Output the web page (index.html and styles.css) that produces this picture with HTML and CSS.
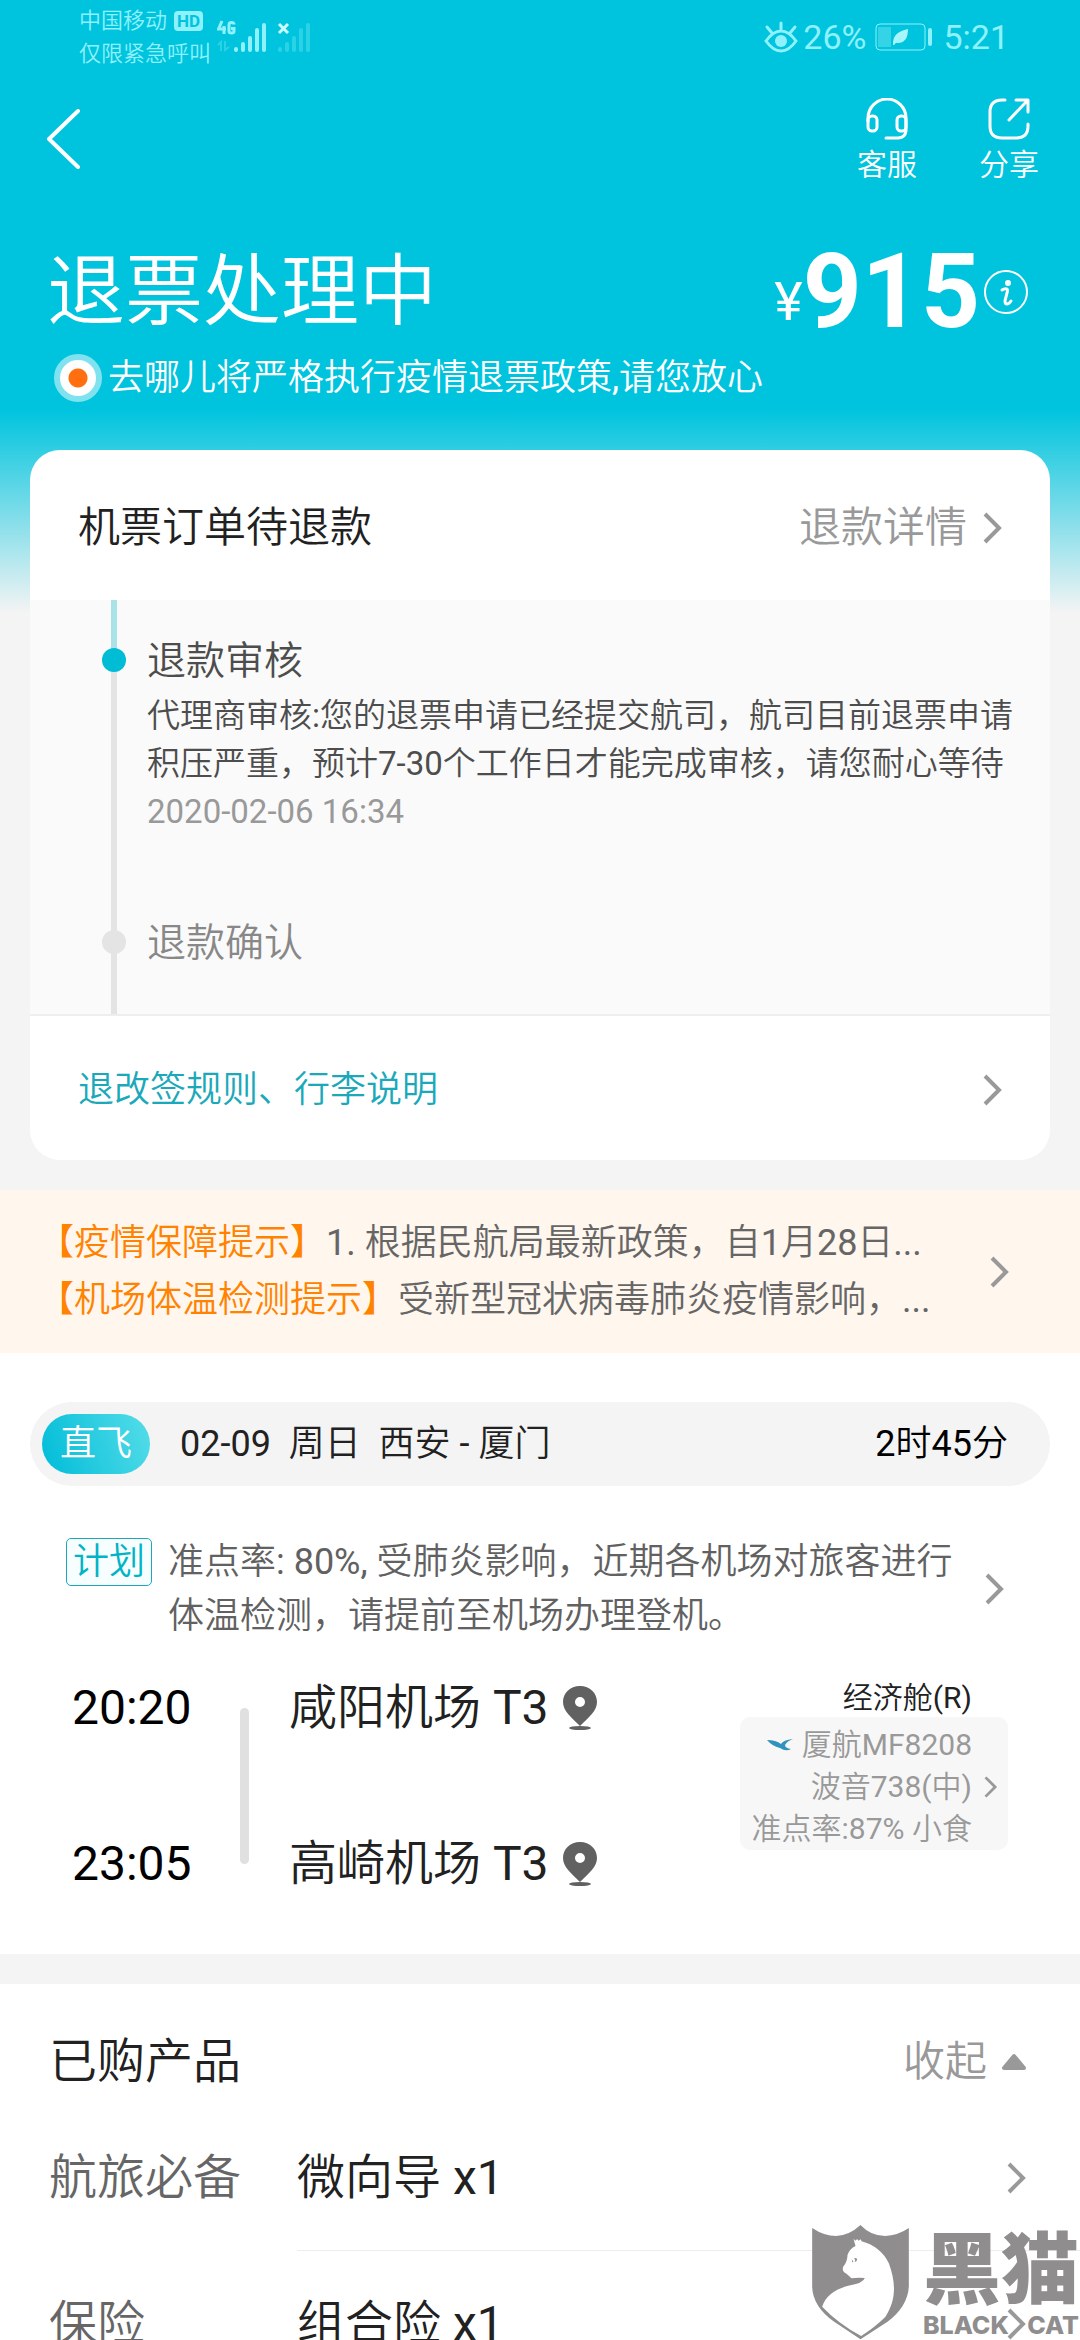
FILE: index.html
```html
<!DOCTYPE html>
<html lang="zh-CN">
<head>
<meta charset="utf-8">
<meta name="viewport" content="width=device-width">
<title>退票处理中</title>
<link rel="stylesheet" href="styles.css">
</head>
<body>
<svg class="defs" aria-hidden="true">
  <symbol id="chevron" viewBox="0 0 20 32"><path d="M2 2 16 16 2 30" fill="none" stroke="currentColor" stroke-width="4"/></symbol>
  <symbol id="pin" viewBox="0 0 34 44"><path fill="currentColor" fill-rule="evenodd" d="M17 0C7 0 0 7 0 16c0 9 8 15 17 24 9-9 17-15 17-24C34 7 27 0 17 0Zm0 11a5 5 0 1 1 0 10 5 5 0 0 1 0-10Z"/><ellipse cx="17" cy="42" rx="11" ry="2" fill="currentColor"/></symbol>
</svg>
<div class="page">
  <div class="status">
    <div class="carriers">
      <div class="carrier">中国移动 <span class="hd">HD</span></div>
      <div class="carrier">仅限紧急呼叫</div>
    </div>
    <svg class="signals" viewBox="0 0 94 34" aria-hidden="true">
      <g fill="none" stroke="#8ef1fb" stroke-width="3"><path d="M5 1 1.500 9H9M7 6v8M17 4.500Q17 2.500 14.500 2.500T12 5v6q0 2 2.500 2T17 11V8.500h-3"/></g>
      <g stroke="#8ef1fb" stroke-width="4" stroke-linecap="round"><path d="M19 29v1M26 24v6M33 18v12M40 10v20M47 5v25"/></g>
      <g stroke="#2bd2e6" stroke-width="4" stroke-linecap="round"><path d="M63 29v1M70 24v6M77 18v12M84 10v20M91 5v25"/></g>
      <path d="m62 4 9 9m0-9-9 9" stroke="#c9fbff" stroke-width="3"/>
      <path d="M4 31v-9l-3 3m7-4v9l4-3" fill="none" stroke="#2bd2e6" stroke-width="2"/>
    </svg>
    <div class="power">
      <svg width="34" height="32" viewBox="0 0 34 32" aria-hidden="true"><path d="M2 20Q9 10 17 10t15 10q-7 10-15 10T2 20ZM17 10V2M8 12 3 6m23 6 5-6" fill="none" stroke="#8ef1fb" stroke-width="3" stroke-linecap="round"/><circle cx="17" cy="20" r="6" fill="#8ef1fb"/></svg>
      <span>26%</span>
      <svg class="battery" width="58" height="28" viewBox="0 0 58 28" aria-hidden="true"><rect x="1" y="1" width="49" height="26" rx="4" fill="none" stroke="#8ef1fb" stroke-width="1"/><rect x="3" y="4" width="13" height="20" fill="#35d3e6"/><rect x="53" y="5" width="4" height="18" rx="2" fill="#8ef1fb"/><path d="M18 22q-1-13 15-16 0 15-12 14l8-9-10 11Z" fill="#a9f5fc"/></svg>
      <span>5:21</span>
    </div>
  </div>

  <header class="nav">
    <button class="back" aria-label="返回"><svg width="34" height="60" viewBox="0 0 34 60"><path d="M32 2 3 30l29 28" fill="none" stroke="#fff" stroke-width="4" stroke-linecap="round" stroke-linejoin="round"/></svg></button>
    <div class="actions">
      <button class="action"><svg width="42" height="42" viewBox="0 0 42 42"><g fill="none" stroke="#fff" stroke-width="3" stroke-linecap="round"><path d="M2 23v-3a19 19 0 0 1 38 0v13q-1 7-8 7H20"/><rect x="2" y="18" width="9" height="15" rx="4"/><rect x="31" y="18" width="9" height="15" rx="4"/></g></svg>客服</button>
      <button class="action"><svg width="42" height="42" viewBox="0 0 42 42"><path d="M17 2h-3Q2 2 2 14v14q0 12 12 12h14q12 0 12-12v-2M21 22 39 3M28 2h12v12" fill="none" stroke="#fff" stroke-width="3" stroke-linecap="round" stroke-linejoin="round"/></svg>分享</button>
    </div>
  </header>

  <section class="summary">
    <h1>退票处理中</h1>
    <div class="price"><span class="yen">¥</span><strong>915</strong>
      <button class="info" aria-label="说明"><svg width="45" height="45" viewBox="0 0 45 45"><circle cx="22" cy="22" r="21" fill="none" stroke="#fff" stroke-width="2"/><circle cx="24" cy="13" r="3" fill="#fff"/><path d="M18 20q3-2 5-1 1 1 0 4l-2 8q0 3 2 3t4-3" fill="none" stroke="#fff" stroke-width="3" stroke-linecap="round"/></svg></button>
    </div>
  </section>
  <p class="promise"><span class="radio"></span>去哪儿将严格执行疫情退票政策,请您放心</p>

  <section class="card">
    <div class="card-head">
      <h2>机票订单待退款</h2>
      <a class="detail" href="#">退款详情<svg class="chev"><use href="#chevron"/></svg></a>
    </div>
    <ol class="steps">
      <li class="step done">
        <h3>退款审核</h3>
        <p>代理商审核:您的退票申请已经提交航司，航司目前退票申请积压严重，预计7-30个工作日才能完成审核，请您耐心等待</p>
        <time>2020-02-06 16:34</time>
      </li>
      <li class="step"><h3>退款确认</h3></li>
    </ol>
    <a class="rules" href="#">退改签规则、行李说明<svg class="chev"><use href="#chevron"/></svg></a>
  </section>

  <a class="notice" href="#">
    <div>
      <p><em>【疫情保障提示】</em>1. 根据民航局最新政策，自1月28日...</p>
      <p><em>【机场体温检测提示】</em>受新型冠状病毒肺炎疫情影响，...</p>
    </div>
    <svg class="chev"><use href="#chevron"/></svg>
  </a>

  <section class="flight">
    <div class="route">
      <span class="direct">直飞</span>
      <span class="date">02-09&nbsp; 周日&nbsp; 西安 - 厦门</span>
      <span class="duration">2时45分</span>
    </div>
    <a class="plan" href="#">
      <span class="tag">计划</span>
      <p>准点率: 80%, 受肺炎影响，近期各机场对旅客进行体温检测，请提前至机场办理登机。</p>
      <svg class="chev"><use href="#chevron"/></svg>
    </a>
    <div class="trip">
      <div class="times"><time>20:20</time><time>23:05</time></div>
      <div class="bar"></div>
      <div class="airports">
        <div>咸阳机场 T3<svg class="pin"><use href="#pin"/></svg></div>
        <div>高崎机场 T3<svg class="pin"><use href="#pin"/></svg></div>
      </div>
      <div class="plane">
        <p class="cabin">经济舱(R)</p>
        <a class="model" href="#">
          <div>
            <p><svg class="bird" width="27" height="14" viewBox="0 0 27 14" aria-hidden="true"><path d="M0 2q9 0 14 4 2-4 12-5-6 2-8 6 0 3 6 4-5 3-11-1Q5 8 0 2Z" fill="#2f93bd"/></svg>厦航MF8208</p>
            <p>波音738(中)</p>
            <p>准点率:87% 小食</p>
          </div>
          <svg class="chev small"><use href="#chevron"/></svg>
        </a>
      </div>
    </div>
  </section>

  <section class="products">
    <div class="products-head"><h2>已购产品</h2><button class="fold">收起<svg width="26" height="18" viewBox="0 0 26 18"><path d="M13 3 3 15h20Z" fill="#999" stroke="#999" stroke-width="4" stroke-linejoin="round"/></svg></button></div>
    <a class="product" href="#"><span class="kind">航旅必备</span><span class="item">微向导 x1<svg class="chev"><use href="#chevron"/></svg></span></a>
    <a class="product" href="#"><span class="kind">保险</span><span class="item">组合险 x1<svg class="chev"><use href="#chevron"/></svg></span></a>
  </section>

  <div class="watermark">
    <svg width="97" height="115" viewBox="64 75 290 345" aria-hidden="true"><path fill="#8f8d8e" d="M64 84q36 24 72 24 40-2 73-33 31 33 74 33 37-1 71-24v176q-4 60-64 105l-81 53-79-53Q66 320 64 260Z"/><path fill="#fff" d="m188 116 6 6 5-5 4 5 7-4 2 6q58 16 82 66c22 60 22 110-10 160q-30 30-73 58-70-38-117-88 14-45 78-63 45-7 50-23-22-2-40 1-8-8-15-14-15-6-10-21 13-15 13-35 7-20 24-27Z"/><path fill="#8f8d8e" d="m183 178 5 8-4 1Zm7-4q10-1 9 5-2 6-7 7 3-6-2-12Z"/></svg>
    <div class="brand"><span class="brand-cn">黑猫</span><span class="brand-en"><span>BLACK</span><span>CAT</span></span></div>
  </div>
</div>
</body>
</html>
```
FILE: styles.css
```css
* { box-sizing: border-box; margin: 0; padding: 0; }
body {
  font-family: Roboto, "Noto Sans CJK SC DemiLight", "Noto Sans CJK SC Light", "Noto Sans CJK SC", sans-serif;
  font-weight: 400;
  color: #212121;
  background: #f4f4f4;
}
button { font: inherit; color: inherit; background: none; border: 0; display: flex; }
a { color: inherit; text-decoration: none; }
h1, h2, h3 { font-weight: 400; }
ol { list-style: none; }
svg { display: block; flex: none; }
.defs { position: absolute; width: 0; height: 0; }

.page {
  position: relative;
  height: 100vh;
  overflow: hidden;
  background: linear-gradient(#00c4de 410px, #f4f4f4 613px);
}

.status { display: flex; padding: 4px 71px 4px 79px; color: #8ef1fb; }
.carrier { display: flex; align-items: center; gap: 7px; font-size: 22px; line-height: 33px; }
.hd {
  padding: 0 3px;
  border-radius: 4px;
  background: #8ef1fb;
  color: #00c4de;
  font-size: 17px;
  font-weight: 700;
  line-height: 20px;
}
.signals { width: 94px; height: 34px; margin: 16px 0 0 6px; }
.power { display: flex; align-items: center; gap: 5px; height: 66px; margin-left: auto; font-size: 34px; }
.battery { margin: 0 5px 0 4px; }

.nav { display: flex; justify-content: space-between; align-items: center; padding: 24px 41px 0 46px; color: #fff; }
.back { padding-bottom: 4px; }
.actions { display: flex; gap: 62px; }
.action { flex-direction: column; align-items: center; gap: 6px; font-size: 30px; line-height: 38px; }

.summary { display: flex; justify-content: space-between; align-items: center; margin-top: 43px; padding: 0 51px 0 47px; color: #fff; }
.summary h1 { padding-top: 6px; font-size: 78px; line-height: 120px; }
.price { display: flex; align-items: center; padding-top: 4px; }
.price strong { font-size: 103px; line-height: 120px; }
.yen { padding-top: 20px; font-size: 54px; line-height: 60px; }
.info { margin-left: 4px; }
.promise { display: flex; align-items: center; gap: 6px; padding: 0 54px; color: #fff; font-size: 36px; line-height: 50px; }
.radio { width: 48px; height: 48px; border: 6px solid #80e2ef; border-radius: 50%; background: radial-gradient(circle, #ff6f10 9px, #fff 10px); }

.chev { width: 20px; height: 32px; margin-left: auto; color: #999; }

.card { margin: 47px 30px 30px; border-radius: 30px; background: #fff; overflow: hidden; }
.card-head { display: flex; align-items: center; height: 150px; padding: 6px 47px 0 48px; font-size: 42px; line-height: 60px; }
.card-head h2 { font-size: 42px; }
.detail { display: flex; align-items: center; gap: 16px; margin-left: auto; color: #999; }
.steps { background: #fafafa; border-bottom: 2px solid #eee; }
.step {
  position: relative;
  min-height: 132px;
  padding: 34px 30px 0 117px;
  color: #888;
  background: linear-gradient(#e4e4e4, #e4e4e4) 81px 0 / 6px 100% no-repeat;
}
.step::before { content: ""; position: absolute; left: 72px; top: 48px; width: 24px; height: 24px; border-radius: 50%; background: #e4e4e4; }
.step h3 { font-size: 39px; line-height: 54px; }
.step.done {
  min-height: 282px;
  color: #4d4d4d;
  background: linear-gradient(#a9e3e8 60px, #e4e4e4 60px) 81px 0 / 6px 100% no-repeat;
}
.step.done::before { background: #00bcd4; }
.step p, .step time { display: block; font-size: 33px; line-height: 48px; }
.step p { margin-top: 4px; }
.step time { color: #999; }
.rules { display: flex; align-items: center; height: 144px; padding: 4px 47px 0 48px; color: #1ba9ba; font-size: 36px; line-height: 54px; }

.notice { display: flex; align-items: center; height: 163px; padding: 0 70px 0 38px; background: #fff6ee; color: #666; font-size: 36px; line-height: 57px; }
.notice em { color: #ff8300; font-style: normal; }

.flight { padding: 49px 30px 60px; background: #fff; }
.route { display: flex; align-items: center; height: 84px; padding: 0 42px 0 12px; border-radius: 42px; background: #f4f4f4; font-size: 36px; line-height: 54px; }
.direct { width: 108px; border-radius: 30px; background: linear-gradient(70deg, #00bcd8, #55dde9); color: #fff; line-height: 60px; text-align: center; }
.date { margin-left: 30px; }
.duration { margin-left: auto; color: #000; }
.plan { display: flex; margin-top: 49px; padding: 0 45px 0 36px; color: #616161; font-size: 36px; line-height: 54px; }
.tag { width: 86px; height: 48px; margin: 3px 16px 0 0; border: 1px solid #1ba9ba; border-radius: 5px; background: #f6feff; color: #00b4c6; line-height: 46px; text-align: center; }
.plan p { flex: 1; padding-right: 30px; }
.plan .chev { align-self: center; }
.trip { display: flex; align-items: flex-start; margin-top: 35px; padding: 0 42px; font-size: 48px; line-height: 60px; }
.times { display: grid; gap: 96px; width: 168px; color: #000; }
.bar { width: 9px; height: 156px; margin-top: 30px; border-radius: 5px; background: #e0e0e0; }
.airports { display: grid; gap: 96px; margin-left: 40px; }
.airports div { display: flex; align-items: center; gap: 14px; }
.pin { width: 34px; height: 44px; color: #616161; }
.plane { margin-left: auto; font-size: 30px; line-height: 42px; }
.cabin { padding-right: 36px; line-height: 39px; text-align: right; }
.model { display: flex; align-items: center; gap: 12px; padding: 7px 10px 0 12px; border-radius: 10px; background: #f7f7f7; color: #999; }
.model p { display: flex; justify-content: flex-end; align-items: center; gap: 8px; }
.small { width: 14px; height: 22px; }

.products { margin-top: 30px; background: #fff; font-size: 48px; line-height: 72px; }
.products-head { display: flex; align-items: center; justify-content: space-between; padding: 42px 53px 7px 49px; }
.products h2 { font-size: 48px; }
.fold { align-items: center; gap: 14px; color: #999; font-size: 42px; }
.product { display: flex; align-items: center; padding-left: 49px; }
.kind { width: 248px; color: #666; }
.item { display: flex; flex: 1; align-items: center; height: 146px; padding-right: 53px; border-bottom: 1px solid #eee; }

.watermark { position: absolute; right: 1px; bottom: 0; display: flex; gap: 14px; color: #8f8d8e; }
.brand { display: flex; flex-direction: column; gap: 8px; }
.brand-cn { font-family: "Noto Sans CJK SC", sans-serif; font-size: 78px; font-weight: 900; line-height: 78px; }
.brand-en { display: flex; justify-content: space-between; font-family: Inter, sans-serif; font-size: 25px; font-weight: 800; line-height: 28px; }
```
